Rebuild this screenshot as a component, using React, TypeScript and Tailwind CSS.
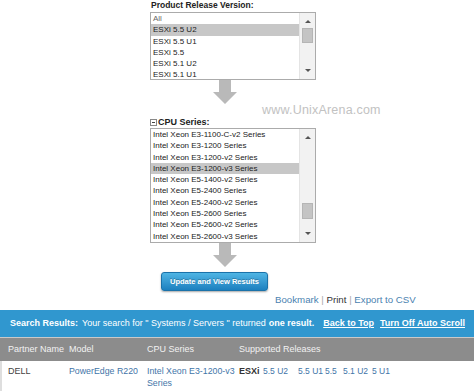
const RELEASES = ['All', 'ESXi 5.5 U2', 'ESXi 5.5 U1', 'ESXi 5.5', 'ESXi 5.1 U2', 'ESXi 5.1 U1'];

const CPUS = [
  'Intel Xeon E3-1100-C-v2 Series',
  'Intel Xeon E3-1200 Series',
  'Intel Xeon E3-1200-v2 Series',
  'Intel Xeon E3-1200-v3 Series',
  'Intel Xeon E5-1400-v2 Series',
  'Intel Xeon E5-2400 Series',
  'Intel Xeon E5-2400-v2 Series',
  'Intel Xeon E5-2600 Series',
  'Intel Xeon E5-2600-v2 Series',
  'Intel Xeon E5-2600-v3 Series',
];

function DownArrow() {
  return (
    <svg width="24" height="24" viewBox="0 0 24 24" className="block">
      <path d="M6 0 H18 V12 H24 L12 24 L0 12 H6 Z" fill="#b9b9b9" />
    </svg>
  );
}

function ScrollBar({ thumbTop, thumbH }: { thumbTop: number; thumbH: number }) {
  return (
    <div className="relative w-[16px] bg-[#f2f2f2] border-l border-[#e4e4e4]">
      <div className="absolute left-[5px] top-[7px] w-0 h-0 border-l-[3px] border-r-[3px] border-b-[3px] border-l-transparent border-r-transparent border-b-[#555]" />
      <div
        className="absolute left-[2px] w-[11px] bg-[#c4c4c4] border border-[#b5b5b5]"
        style={{ top: thumbTop, height: thumbH }}
      />
      <div className="absolute left-[5px] bottom-[7px] w-0 h-0 border-l-[3px] border-r-[3px] border-t-[3px] border-l-transparent border-r-transparent border-t-[#555]" />
    </div>
  );
}

function ListBox({ items, selected, height, thumbTop, thumbH }: { items: string[]; selected: number; height: string; thumbTop: number; thumbH: number }) {
  return (
    <div className={`flex w-[166px] ${height} border border-[#ababab] bg-white`}>
      <div className="flex-1 overflow-hidden">
        {items.map((it, i) => (
          <div
            key={it}
            className={`h-[11.3px] leading-[11.3px] pl-[2px] text-[8px] whitespace-nowrap ${i === selected ? 'bg-[#c7c7c7] text-[#222]' : it === 'All' ? 'text-[#666]' : 'text-[#222]'}`}
          >
            {it}
          </div>
        ))}
      </div>
      <ScrollBar thumbTop={thumbTop} thumbH={thumbH} />
    </div>
  );
}

export default function App() {
  return (
    <div className="relative w-[474px] h-[392px] overflow-hidden bg-white font-['Liberation_Sans',Arial,sans-serif]">
      {/* watermark */}
      <div className="absolute left-[262px] top-[101px] text-[12.5px] text-[#c2c2c2] tracking-[0.2px]">www.UnixArena.com</div>

      <div className="pl-[150px]">
        <div className="h-[12px] leading-[11px] pl-[1px] text-[8.5px] font-bold text-[#222]">Product Release Version:</div>
        <ListBox items={RELEASES} selected={1} height="h-[68px]" thumbTop={15} thumbH={15} />

        <div className="ml-[63px]">
          <DownArrow />
        </div>

        <div className="mt-[13px] h-[11px] flex items-center gap-[1px] text-[9px] font-bold leading-[11px] text-[#222]">
          <span className="w-[7px] h-[7px] border border-[#888] bg-white flex items-center justify-center">
            <span className="w-[3px] h-[1px] bg-[#444]" />
          </span>
          <span>CPU Series:</span>
        </div>
        <ListBox items={CPUS} selected={3} height="h-[115px]" thumbTop={74} thumbH={16} />

        <div className="ml-[63px]">
          <DownArrow />
        </div>

        <button className="mt-[5px] ml-[11px] w-[107px] h-[19px] rounded-[3px] border border-[#1b72a9] bg-gradient-to-b from-[#4fb5e4] to-[#1c80bf] text-white text-[7.5px] font-bold shadow-[0_1px_2px_rgba(0,0,0,0.35)] [text-shadow:0_-1px_0_rgba(0,0,0,0.25)]">
          Update and View Results
        </button>
      </div>

      <div className="mt-[3px] pl-[275px] h-[12px] leading-[12px] text-[9.7px] whitespace-nowrap">
        <span className="text-[#4a82b0]">Bookmark</span>
        <span className="text-[#aaa]"> | </span>
        <span className="text-[#333]">Print</span>
        <span className="text-[#aaa]"> | </span>
        <span className="text-[#4a82b0]">Export to CSV</span>
      </div>

      <div className="mt-[4px] h-[27px] bg-[#3097cf] flex items-center pl-[10px] text-[9px] text-white whitespace-nowrap">
        <span className="font-bold">Search Results:</span>
        <span className="ml-[4px]">Your search for " Systems / Servers " returned</span>
        <span className="ml-[3px] font-bold">one result.</span>
        <span className="ml-[9px] font-bold underline">Back to Top</span>
        <span className="ml-[6px] font-bold underline">Turn Off Auto Scroll</span>
      </div>

      <div className="h-[24px] bg-[#8c8c8c] border-t border-[#c9c9c9] grid grid-cols-[61px_78px_92px_1fr] items-center pl-[8px] text-[9px] text-[#f2f2f2]">
        <span>Partner Name</span>
        <span>Model</span>
        <span>CPU Series</span>
        <span>Supported Releases</span>
      </div>

      <div className="h-[30px] border-l-2 border-[#dedede] grid grid-cols-[61px_78px_92px_1fr] pl-[6px] pt-[4px] text-[9px] leading-[12px] text-[#444]">
        <span>DELL</span>
        <span className="text-[#3f75a8] text-[8.8px]">PowerEdge R220</span>
        <span className="text-[#3f75a8] text-[8.8px]">
          Intel Xeon E3-1200-v3
          <br />
          Series
        </span>
        <div className="flex whitespace-nowrap text-[8.5px]">
          <span className="w-[24px] text-[9px] font-bold text-[#333]">ESXi</span>
          <span className="w-[35px] text-[#3f75a8]">5.5 U2</span>
          <span className="w-[27px] text-[#3f75a8]">5.5 U1</span>
          <span className="w-[18px] text-[#3f75a8]">5.5</span>
          <span className="w-[29px] text-[#3f75a8]">5.1 U2</span>
          <span className="text-[#3f75a8]">5 U1</span>
        </div>
      </div>
    </div>
  );
}
